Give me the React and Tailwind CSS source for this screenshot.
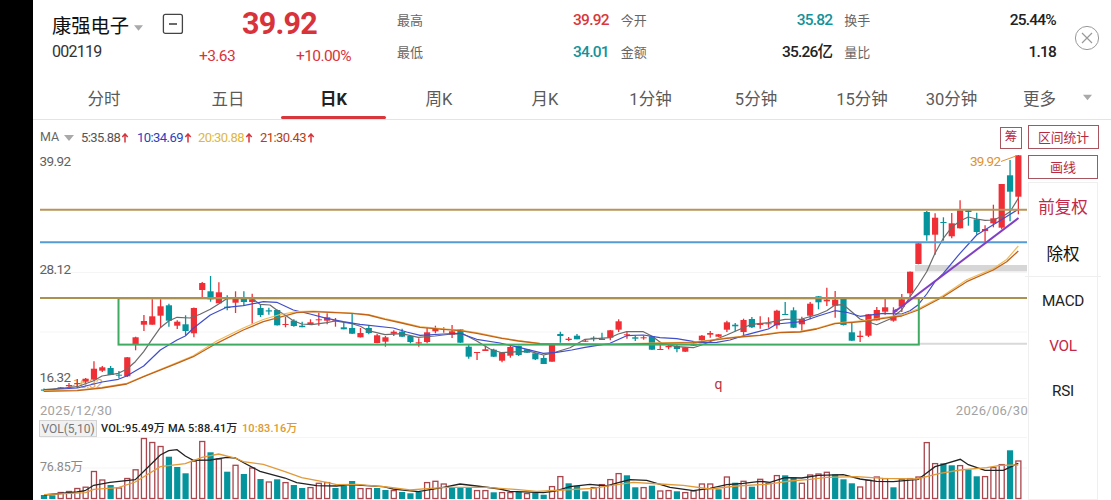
import clsx from 'clsx';

const RED = '#ef2f35';
const TEAL = '#05949c';
const VOL_RED = '#a9454d';

// body top, body bottom, high, low, volume top ('r' up day, 'g' down day)
const DAYS = [
  ['g', 389.5, 390.7, 388.5, 391.5, 'g', 495], ['r', 389, 390, 389, 390, 'g', 495.3],
  ['r', 387.3, 389, 387, 389, 'r', 492.5], ['r', 385, 386.2, 383, 388, 'r', 491.5],
  ['r', 383, 384.2, 379, 388, 'r', 488.5], ['r', 378.7, 381.7, 378, 383, 'r', 487.2],
  ['r', 368.7, 379.3, 361.3, 380.7, 'r', 471.5], ['r', 367.3, 370.7, 366, 372, 'r', 480],
  ['g', 368, 375, 366, 375, 'g', 485], ['g', 374.7, 375.7, 371, 378.3, 'r', 488],
  ['r', 357.3, 376.3, 357, 377, 'r', 478.5], ['r', 337.3, 344, 336.7, 350.3, 'r', 469.8],
  ['r', 321, 324.7, 315, 331, 'r', 438.5], ['r', 316.3, 324.7, 299.3, 324.7, 'r', 442.5],
  ['r', 306.3, 315.7, 299.3, 327.7, 'r', 446.5], ['g', 305.3, 320.7, 303.7, 326.7, 'g', 456.7],
  ['r', 321.7, 325.7, 320.3, 329, 'g', 467], ['g', 324.3, 331, 315.3, 335.3, 'g', 473.3],
  ['r', 308, 333.3, 307.5, 337.3, 'r', 461.3], ['r', 283, 290, 282, 297.7, 'r', 441.5],
  ['g', 291.3, 299.3, 276, 301.7, 'g', 452.3], ['r', 292.3, 303.3, 282.3, 303.3, 'r', 459],
  ['g', 306.7, 308, 295.3, 310.3, 'g', 471.7], ['r', 297.3, 302.7, 291.3, 313, 'r', 465.3],
  ['g', 298.3, 302, 291.3, 305.7, 'g', 474], ['r', 299.3, 302, 293.7, 323.7, 'r', 468],
  ['g', 308, 315, 305, 317, 'g', 479], ['g', 310.3, 311.5, 307.7, 314.7, 'r', 482],
  ['g', 310, 325.3, 309.5, 325.5, 'g', 479.3], ['r', 324, 325, 316.7, 327.3, 'r', 482.6],
  ['g', 320.7, 326, 319.3, 326.7, 'g', 485], ['g', 325.7, 327.2, 321.7, 327.2, 'g', 488],
  ['r', 322.3, 324.7, 319.3, 325, 'r', 487.6], ['r', 319.3, 320.3, 312.7, 325.7, 'r', 483.3],
  ['r', 317.3, 320.7, 313.3, 324.3, 'r', 482.6], ['r', 320.3, 321.3, 318, 326.7, 'g', 488],
  ['g', 327.3, 329.3, 322, 329.3, 'g', 485.7], ['g', 328, 333.7, 313.7, 334, 'g', 481],
  ['r', 333, 337.3, 328, 337.5, 'r', 488.6], ['g', 328, 333, 325, 334.3, 'r', 488.6],
  ['r', 335.3, 343, 334, 343.3, 'g', 488], ['r', 337.3, 341.7, 336, 346.7, 'g', 490],
  ['r', 331.7, 333.7, 330.3, 336, 'r', 490.6], ['g', 331.7, 336.7, 328.7, 337, 'g', 492],
  ['g', 336, 342, 335.5, 343.3, 'g', 493.3], ['r', 342.3, 343.5, 338.3, 346.7, 'g', 492],
  ['r', 332.3, 342, 328, 343.3, 'r', 482.6], ['r', 328.7, 331.3, 325.7, 333.3, 'r', 481.3],
  ['r', 329, 330, 327.3, 332.7, 'r', 484], ['r', 331.3, 334.7, 325, 338, 'g', 488],
  ['g', 329.3, 342.7, 329, 343, 'g', 487.3], ['g', 346.7, 356.7, 345, 358.7, 'g', 488],
  ['r', 352, 353, 352, 360, 'r', 490.6], ['r', 349.3, 351, 345.7, 351, 'r', 490.6],
  ['g', 349.7, 356.7, 348.7, 357, 'g', 492.3], ['r', 352.3, 360.7, 352, 362.3, 'r', 492.6],
  ['r', 347, 355.7, 346, 357.7, 'r', 492.6], ['g', 346, 355, 345.7, 356, 'g', 492],
  ['g', 349.3, 352.7, 349, 353, 'r', 493.6], ['g', 353.3, 359.3, 353, 360, 'g', 492.3],
  ['g', 358, 364, 355.3, 364, 'g', 494.7], ['r', 345, 361.7, 345, 361.7, 'r', 486.6],
  ['g', 334, 336, 331.7, 342.7, 'r', 476.6], ['r', 338.7, 340, 337, 341, 'g', 483.3],
  ['g', 335.7, 339.3, 334, 339.3, 'g', 485.7], ['r', 340.7, 341.7, 340, 342, 'g', 491.3],
  ['g', 337.7, 339, 336.3, 341.3, 'r', 487.6], ['g', 338.7, 340, 332.7, 340, 'r', 484.6],
  ['r', 330.3, 337.7, 330, 340.3, 'r', 479.6], ['r', 321.3, 329.7, 319.3, 332, 'r', 473.6],
  ['r', 334.3, 335.3, 331, 338.7, 'g', 475.3], ['g', 337.3, 338.7, 335.7, 341, 'g', 487.3],
  ['r', 337.3, 338.3, 335.7, 339.7, 'r', 487.6], ['g', 336.3, 349.7, 336, 350, 'g', 485.7],
  ['r', 349, 350, 344, 350, 'r', 491], ['r', 346, 347.3, 344.3, 349.3, 'r', 490.6],
  ['g', 346, 349, 345, 352.3, 'g', 491.3], ['r', 347.3, 351.7, 347, 352, 'r', 492.6],
  ['r', 343.7, 345.7, 343.7, 346, 'r', 491], ['r', 335.7, 340.3, 335, 341, 'r', 484],
  ['r', 333, 334.7, 331, 337.7, 'r', 484], ['r', 334.3, 336.7, 334, 337, 'g', 489.3],
  ['r', 322.3, 329.7, 320.7, 332, 'r', 477], ['g', 324.7, 326.3, 323, 331.3, 'g', 482.7],
  ['r', 320, 332, 318.7, 336, 'r', 481.3], ['g', 319, 327.3, 317, 328, 'g', 486.7],
  ['r', 323.3, 325, 316.3, 328.7, 'r', 479.3], ['r', 323.3, 324.3, 317.3, 327.7, 'r', 483.3],
  ['r', 310.7, 325.3, 309.7, 328.7, 'r', 475.6], ['g', 314, 315, 302, 315, 'g', 475.3],
  ['g', 310.3, 327.7, 307.3, 328, 'g', 477.3], ['r', 319, 324.3, 316.7, 330.7, 'r', 483.3],
  ['r', 303.7, 315.7, 302, 319.3, 'r', 475], ['g', 296.3, 302.3, 296, 309.3, 'r', 474],
  ['r', 299.7, 301.3, 287.7, 306, 'r', 472.3], ['r', 299.7, 305.7, 291, 317.7, 'g', 474.3],
  ['g', 299, 325, 299, 325.5, 'g', 479.3], ['g', 332.3, 340.7, 323, 341, 'g', 483.3],
  ['r', 335.7, 337, 330.7, 342, 'r', 487], ['r', 314.3, 335.7, 314, 337, 'r', 480.3],
  ['r', 310, 320.3, 307, 320.5, 'r', 477], ['r', 307.3, 311.7, 299, 314.7, 'r', 478.6],
  ['r', 316, 320.7, 307.3, 321.7, 'g', 487.3], ['r', 299.3, 306.7, 294, 312, 'r', 479.3],
  ['r', 271.7, 293.3, 271.5, 296.7, 'r', 478.6], ['r', 243.3, 264, 243, 264.3, 'r', 477],
  ['g', 212, 235.3, 211, 240.7, 'r', 442.6], ['r', 217.7, 234.7, 213.3, 254.7, 'r', 463.6],
  ['g', 222, 223, 217.3, 240.7, 'g', 463.3], ['r', 223.3, 236.3, 213, 238.3, 'g', 465.3],
  ['r', 210.3, 228.3, 200.3, 228.5, 'r', 465.6], ['g', 210.3, 212, 210, 225.7, 'g', 469.7],
  ['g', 219.3, 232, 212.7, 234.7, 'g', 476.3], ['r', 229, 231, 225.3, 243.3, 'r', 476.6],
  ['r', 218.3, 223.3, 204.7, 227.3, 'r', 467.6], ['r', 184, 227.7, 184, 229.3, 'r', 464.6],
  ['g', 175.3, 191.7, 160, 221.3, 'g', 450.3], ['r', 155.3, 196.7, 155, 214.3, 'r', 461],
];

const MA5 = '44,389.7 60.7,388.3 77.3,386.7 93.7,380.7 102,376 118.3,373.3 126.7,369.3 135.3,361.7 143.7,351.7 152,339.3 160.3,327.7 168.7,321 177,317.3 190,318 200,314.3 210.3,309.3 218.7,304 226.7,298.7 243,298 252,298.7 260,304.3 270,305 276.7,310 285,315 293.3,320.7 301.7,324 311.7,324.7 326.7,322.7 335.3,321 352,323.7 360.3,326.3 368.3,330.7 385,334.7 401.7,333.7 418.3,337.3 435,336 451.7,334 463.3,334 476.7,341 490,349 501.7,352.7 518.3,351.7 530,351.3 543.3,355 551.7,353.3 570,347.7 585,339.3 610,337.7 618.3,334 626.7,331.7 643.3,331.7 651.7,336 661.7,343.3 676.7,346.7 693.3,347.7 701.7,345 716.7,339 726.7,335 743.3,327.7 751.7,324.3 768.3,322.7 785,319.3 801.7,319 818.3,314.3 826.7,310.7 835,305 843.3,304.7 851.7,311.7 860,319 876.7,324.7 890,319 901.7,310 910,296.7 918.3,285 926.7,271.7 935,253.3 943.3,238.3 951.7,227.3 960,221 968.3,217 976.7,219 985,220.3 993.3,220 1005,215 1010,211.7 1018.3,198.3';
const MA10 = '44,390 77.3,388 102,382 118.3,379.3 126.7,376 143.7,366 160.3,350 177,340 185.3,336 193.3,328.3 210.3,315 226.7,307.3 243.3,305.7 263.3,301.7 276.7,302.3 293.3,310 310,314 326.7,318.3 343.3,321.7 360,324.3 393.3,328 406.7,332 420,335.3 443.3,334 460,333.3 476.7,339.3 500,343 520,347.7 543.3,353.3 556.7,352.3 571.7,350 585,347.3 610,343.3 626.7,335.7 643.3,335 660,337.7 676.7,338.7 700,342.7 716.7,342.3 730,340 743.3,335.7 751.7,333.3 768.3,329 776.7,324 801.7,321.7 818.3,316 835,310.7 846.7,312.3 860,316.3 883.3,313.3 901.7,314 910,310.7 918.3,304.7 926.7,294 935,281.7 943.3,273.3 960,253.3 976.7,235 990,226.7 1018.3,209.3';
const MA20 = '44,390.6 77.3,390 102,387.4 126.7,383.4 143.7,376.2 177,362.6 193.3,355.8 216.7,341 243.3,328 263.3,319.5 280,314.5 296.7,311.6 313.3,311.2 351.7,313 368.3,314.5 385,318.7 401.7,322.4 420,326.7 443.3,328.8 460,330.2 476.7,332.7 501.7,337.8 518.3,340.5 540,343.3 610,344 693.3,342.2 710,340 726.7,337.8 740,336.5 760,335 780,332.2 800,331.4 816.7,328.4 835,323 853.3,321.7 866.7,320.4 883.3,317.5 901.7,315 918.3,308.8 943.3,295.5 966.7,279.7 993.3,268.6 1006.7,259.5 1018.3,246';
const MA21 = '44,391.3 77.3,390.7 102,388 126.7,384 143.7,376.7 177,363.3 193.3,356.7 216.7,343.3 243.3,330 263.3,321.7 278.3,317.7 296.7,312.7 313.3,311.7 351.7,313.3 368.3,315 385,319.3 401.7,323 420,327.3 443.3,329.3 460,330.7 476.7,333.3 501.7,338.3 518.3,341 540,343.7 610,344.3 693.3,342.7 710,340.7 726.7,338.3 740,337 760,335.3 780,332.7 800,332 816.7,329 835,323.7 853.3,322.3 866.7,321 883.3,318.3 901.7,316 918.3,310 943.3,296.7 966.7,281.7 993.3,270 1006.7,261.7 1018.3,251';
const VOL5 = '44,495 76.7,492 85,490.7 93.7,485.3 110,482.3 135.3,479.7 152,463.3 160.3,455 168.7,450.7 177,449.7 185.3,456 193.3,460.3 210.3,460 226.7,457.3 235.3,458 243.7,462.7 260,471.3 285,478 296.7,482.7 316.7,485.7 336.7,486 350,484.7 383.3,486.7 393.3,489 418.3,491.7 443.3,487.3 460,484 476.7,486 500,489 510,491.3 543.3,492.7 555,491 570,486.7 590,484.3 606.7,486 618.3,482.7 630,479.7 646.7,480.3 656.7,483.3 670,487.3 693.3,490.7 710,488.3 726.7,484.7 743.3,483.3 760,481.3 770,482.3 785,477.7 801.7,478 818.3,475.3 843.3,474.7 860,479 876.7,481.3 893.3,481.7 918.3,479.3 927,472.7 935,466.7 943.3,464.3 960.3,459.3 968.3,464.7 985,470.3 1003.3,470.3 1018.3,463.3';
const VOL10 = '44,494.7 85.7,492.7 93.7,489.3 118.3,487.7 135.3,482 160.3,466.7 185.3,463.7 202,457.3 218.7,454 235.3,458 243.3,461.7 263.3,464.3 285,471.7 301.7,477.7 326.7,482.3 336.7,484.7 356.7,484.3 386.7,487 410,490 426.7,488.7 446.7,487.3 486.7,487.3 518.3,489.7 536.7,491.3 563.3,490 593.3,488.3 610,485.7 633.3,482.3 660,484 683.3,485.3 710,489 736.7,486 766.7,484.3 790,481 810,479.3 826.7,477.3 856.7,476.7 883.3,478.3 916.7,479 940,473.3 960.3,470 986.7,467.7 1000,465.3 1018.3,465';

const TABS = [
  ['分时', 'w-[142px]'],
  ['五日', 'w-[106px]'],
  ['日K', 'w-[105px]'],
  ['周K', 'w-[106px]'],
  ['月K', 'w-[106px]'],
  ['1分钟', 'w-[105px]'],
  ['5分钟', 'w-[106px]'],
  ['15分钟', 'w-[106px]'],
  ['30分钟', 'w-[73px]'],
  ['更多', 'w-[103px]'],
];

const STATS = [
  ['最高', '39.92', 'text-[#d8383d]'],
  ['今开', '35.82', 'text-[#13929a]'],
  ['换手', '25.44%', 'text-[#222]'],
  ['最低', '34.01', 'text-[#13929a]'],
  ['金额', '35.26亿', 'text-[#222]'],
  ['量比', '1.18', 'text-[#222]'],
];

const AVERAGES = [
  ['5:35.88', 'text-[#555]', 'w-[56px]'],
  ['10:34.69', 'text-[#2b3fc0]', 'w-[61px]'],
  ['20:30.88', 'text-[#e0b83c]', 'w-[62px]'],
  ['21:30.43', 'text-[#b8400f]', 'w-[60px]'],
];

const dayX = (i) => 44 + i * 8.328;

function Caret({ className }) {
  return (
    <svg viewBox="0 0 10 6" className={className}>
      <path d="M0 0h10L5 6z" fill="#a9a9a9" />
    </svg>
  );
}

function Header() {
  return (
    <header className="flex h-[79px] shrink-0">
      <div className="w-[148px] pl-[19px] pt-[12px]">
        <div className="flex items-center h-[29px]">
          <span className="text-[19.3px] leading-[29px] whitespace-nowrap text-[#111]">康强电子</span>
          <Caret className="w-[9px] h-[6px] ml-[5px] mt-[3px] shrink-0" />
          <svg viewBox="0 0 22 22" className="w-[22px] h-[22px] ml-[19px] -mt-[5px] shrink-0" fill="none" stroke="#444">
            <rect x="1.4" y="1.4" width="19" height="19" rx="2" strokeWidth="1.3" />
            <path d="M7 11h8" strokeWidth="1.6" />
          </svg>
        </div>
        <div className="text-[16px] leading-[22px] tracking-[-0.75px] text-[#333]">002119</div>
      </div>

      <div className="w-[216px] pt-[6px]">
        <div className="text-[30.5px] leading-[35px] font-bold tracking-[-0.8px] pl-[61px] text-[#d8333a]">39.92</div>
        <div className="flex text-[15.5px] leading-[20px] mt-[5px] tracking-[-0.6px] text-[#d8333a]">
          <span className="w-[97px] pl-[18px]">+3.63</span>
          <span className="pl-[18px]">+10.00%</span>
        </div>
      </div>

      <div className="grid grid-cols-3 gap-x-3 w-[659px] h-[64px] mt-[5px]">
        {STATS.map(([label, value, color]) => (
          <div key={label} className="flex items-center justify-between h-8">
            <span className="text-[13px] text-[#666]">{label}</span>
            <span className={clsx('text-[15.5px] font-medium tracking-[-0.8px]', color)}>{value}</span>
          </div>
        ))}
      </div>

      <svg viewBox="0 0 26 26" className="w-[26px] h-[26px] mt-[25px] ml-[18px] shrink-0" fill="none" stroke="#999">
        <circle cx="13" cy="13" r="11.6" />
        <path d="M8 8l10 10M18 8L8 18" strokeWidth="1.2" />
      </svg>
    </header>
  );
}

function Tabs() {
  return (
    <nav className="flex h-[41px] shrink-0 border-b border-[#e4e4e4] text-[16.5px] text-[#5a5a5a]">
      {TABS.map(([name, width]) => (
        <div
          key={name}
          className={clsx('relative flex items-center justify-center pt-[2px] whitespace-nowrap', width, name === '日K' && 'font-bold text-[#222]')}
        >
          {name}
          {name === '日K' && <span className="absolute inset-x-0 bottom-0 h-[3px] rounded-full bg-[#d8383d]" />}
        </div>
      ))}
      <Caret className="w-[9px] h-[7px] mt-[15px] -ml-[8px]" />
    </nav>
  );
}

function Averages() {
  return (
    <div className="flex items-center h-[28px] pt-[7px] pl-[7px] pr-[6px] text-[13px] tracking-[-0.55px]">
      <span className="w-[24px] text-[#666] tracking-normal text-[12.5px]">MA</span>
      <Caret className="w-[10px] h-[6px] mr-[7px]" />
      {AVERAGES.map(([text, color, width]) => (
        <span key={text} className={clsx('flex items-center whitespace-nowrap', width, color)}>
          {text}
          <svg viewBox="0 0 8 10" className="w-[8px] h-[10px] ml-px shrink-0" fill="none" stroke="#d8333a" strokeWidth="1.5">
            <path d="M4 9.5V1M1.3 4L4 1l2.700 3" />
          </svg>
        </span>
      ))}
      <span className="ml-auto w-[22px] h-[22px] shrink-0 border border-[#a85560] flex items-center justify-center text-[12.5px] tracking-normal text-[#b8283f]">
        筹
      </span>
    </div>
  );
}

function PriceChart() {
  return (
    <svg viewBox="33 148 995 254" className="w-[995px] h-[254px] block" fill="none">
      <path d="M40 272.500H1027M40 332H1027M40 398.500H1027" stroke="#f5f5f5" />
      <rect x="915" y="265" width="112" height="6.400" fill="#d6d6d6" />
      <path d="M919 343.700H1027" stroke="#d9d9d9" strokeWidth="2" />
      <g fontSize="13.500" fill="#606060">
        <text x="39.500" y="166" textLength="31.500">39.92</text>
        <text x="39.500" y="273.500" textLength="31.500">28.12</text>
        <text x="39.500" y="381.500" textLength="31.500">16.32</text>
      </g>
      <path d="M67 388l8-3" stroke="#e8a860" />
      <text x="73" y="388" fontSize="13" fill="#e8a860" textLength="30">16.32</text>

      {DAYS.map(([kind, top, bottom, high, low], i) => {
        const x = dayX(i);
        const color = kind === 'r' ? RED : TEAL;
        return (
          <g key={i}>
            <path d={`M${x} ${high}V${low}`} stroke={color} strokeWidth="1.300" />
            <rect x={x - 3.1} y={top} width="6.200" height={bottom - top} fill={color} />
          </g>
        );
      })}

      <g strokeWidth="1.200" strokeLinejoin="round">
        <polyline points={MA5} stroke="#6b6b6b" />
        <polyline points={MA10} stroke="#3f4ecb" />
        <polyline points={MA20} stroke="#eebc5a" />
        <polyline points={MA21} stroke="#c2611a" strokeWidth="1.300" />
      </g>

      {/* drawn levels and range box */}
      <path d="M40 209.700H1027" stroke="#b79558" strokeWidth="2" />
      <path d="M40 242.300H1027" stroke="#559bd6" strokeWidth="2" />
      <rect x="118.500" y="298.300" width="800.300" height="46.300" stroke="#3faa62" strokeWidth="2" />
      <path d="M40 297.900H1027" stroke="#aa9150" strokeWidth="2" />
      <path d="M893 313L1018.500 218" stroke="#8040c4" strokeWidth="2" />
      <path d="M893 312l4-2" stroke="#8040c4" strokeWidth="3" />

      <path d="M1001 161.500L1016 156" stroke="#e0912f" />
      <text x="970" y="166" fontSize="13.500" fill="#e0912f" textLength="31">39.92</text>
      <text x="714.500" y="388.500" fontSize="14" fill="#b8343c">q</text>
    </svg>
  );
}

function VolumeChart() {
  return (
    <svg viewBox="33 437 995 63" className="w-[995px] h-[63px] block" fill="none">
      <path d="M40 437.500H1027M40 468H1027" stroke="#f5f5f5" />
      <text x="40" y="471" fontSize="12.500" fill="#8a8a8a" textLength="43">76.85万</text>
      {DAYS.map((day, i) => {
        const [kind, top] = day.slice(5);
        const x = dayX(i);
        return kind === 'r' ? (
          <rect key={i} x={x - 2.5} y={top} width="5" height={498.5 - top} stroke={VOL_RED} strokeWidth="1.300" />
        ) : (
          <rect key={i} x={x - 3.1} y={top} width="6.200" height={499 - top} fill={TEAL} />
        );
      })}
      <polyline points={VOL5} stroke="#222" strokeWidth="1.300" />
      <polyline points={VOL10} stroke="#e09a38" strokeWidth="1.300" />
    </svg>
  );
}

function SidePanel() {
  return (
    <aside className="w-[71px] shrink-0 flex flex-col pt-[5px] text-center">
      <div className="h-[24px] border border-[#a85560] text-[12.8px] leading-[24px] text-[#b8283f] whitespace-nowrap">区间统计</div>
      <div className="h-[24px] w-[70px] mt-[6px] border border-[#a85560] text-[13px] leading-[24px] text-[#b8283f]">画线</div>
      <div className="flex-1 w-[70px] mt-[3px] border border-[#efefef]">
        <div className="h-[94px] -mx-1 border-b border-[#efefef] text-[16.5px] leading-[47px] pt-px">
          <div className="text-[#c22848]">前复权</div>
          <div className="text-[#111]">除权</div>
        </div>
        <div className="text-[15.3px] leading-[45px] pt-[2px] tracking-[-0.3px] text-[#222]">
          <div>MACD</div>
          <div className="text-[#c22848]">VOL</div>
          <div>RSI</div>
        </div>
      </div>
    </aside>
  );
}

export default function App() {
  return (
    <div className="flex w-[1111px] h-[500px] overflow-hidden bg-white font-[Roboto,'Noto_Sans_CJK_SC',sans-serif]">
      <div className="w-[33px] shrink-0 bg-black" />
      <div className="flex flex-col w-[1078px]">
        <Header />
        <Tabs />
        <div className="flex flex-1 min-h-0">
          <main className="w-[995px] shrink-0">
            <Averages />
            <PriceChart />
            <div className="flex justify-between h-[17px] pl-[7px] text-[13px] leading-[17px] tracking-[0.3px] text-[#a2a2a2]">
              <span>2025/12/30</span>
              <span>2026/06/30</span>
            </div>
            <div className="flex items-center h-[18px] pl-[6px] text-[11px] whitespace-nowrap">
              <span className="w-[58px] h-[17px] mr-1 border border-[#d4d4d4] bg-[#f1f1f1] text-center text-[12px] leading-[16px] text-[#777]">
                VOL(5,10)
              </span>
              <span className="font-medium text-[#222] w-[141px] pt-[2px] tracking-[0.15px]">VOL:95.49万 MA 5:88.41万</span>
              <span className="font-medium text-[#dd9a30] pt-[2px] tracking-[0.1px]">10:83.16万</span>
            </div>
            <VolumeChart />
          </main>
          <SidePanel />
        </div>
      </div>
    </div>
  );
}
